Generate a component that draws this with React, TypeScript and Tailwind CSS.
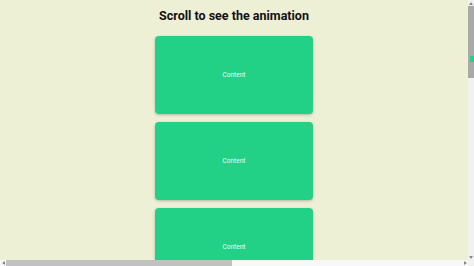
import React from "react";

function Card() {
  return (
    <div className="flex h-[78px] w-[158px] shrink-0 items-center justify-center rounded-[4px] bg-[#22d086] shadow-[0_1px_3px_rgba(0,0,0,0.25)]">
      <span className="text-[6.5px] leading-none text-white/90">Content</span>
    </div>
  );
}

export default function App() {
  return (
    <div
      className="grid h-[266px] w-[474px] grid-cols-[1fr_6px] grid-rows-[1fr_6px] overflow-hidden bg-[#eef0d6]"
      style={{ fontFamily: "Roboto, 'Liberation Sans', sans-serif" }}
    >
      <main className="flex flex-col items-center overflow-hidden">
        <h1 className="pt-[9px] text-[12.5px] font-bold leading-[14px] text-[#111]">
          Scroll to see the animation
        </h1>
        <div className="mt-[13px] flex flex-col gap-[8px]">
          <Card />
          <Card />
          <Card />
        </div>
      </main>
      <div className="relative flex flex-col bg-[#f1f1f1]">
        <div className="flex h-[6px] items-center justify-center">
          <svg width="4" height="3" viewBox="0 0 4 3"><path d="M2 0 L4 3 L0 3 Z" fill="#888" /></svg>
        </div>
        <div className="h-[72px] w-full bg-[#a9a9a9]" />
        <div className="absolute right-0 top-[56px] h-[6px] w-[4px] bg-[#22d086]" />
        <div className="flex-1" />
        <div className="flex h-[6px] items-center justify-center">
          <svg width="4" height="3" viewBox="0 0 4 3"><path d="M0 0 L4 0 L2 3 Z" fill="#888" /></svg>
        </div>
      </div>
      <div className="flex bg-[#f8f8f8]">
        <div className="flex w-[6px] items-center justify-center">
          <svg width="3" height="4" viewBox="0 0 3 4"><path d="M0 2 L3 0 L3 4 Z" fill="#888" /></svg>
        </div>
        <div className="h-full w-[226px] bg-[#c1c1c1]" />
        <div className="flex-1" />
        <div className="flex w-[6px] items-center justify-center">
          <svg width="3" height="4" viewBox="0 0 3 4"><path d="M3 2 L0 0 L0 4 Z" fill="#888" /></svg>
        </div>
      </div>
      <div className="bg-[#f1f1f1]" />
    </div>
  );
}
